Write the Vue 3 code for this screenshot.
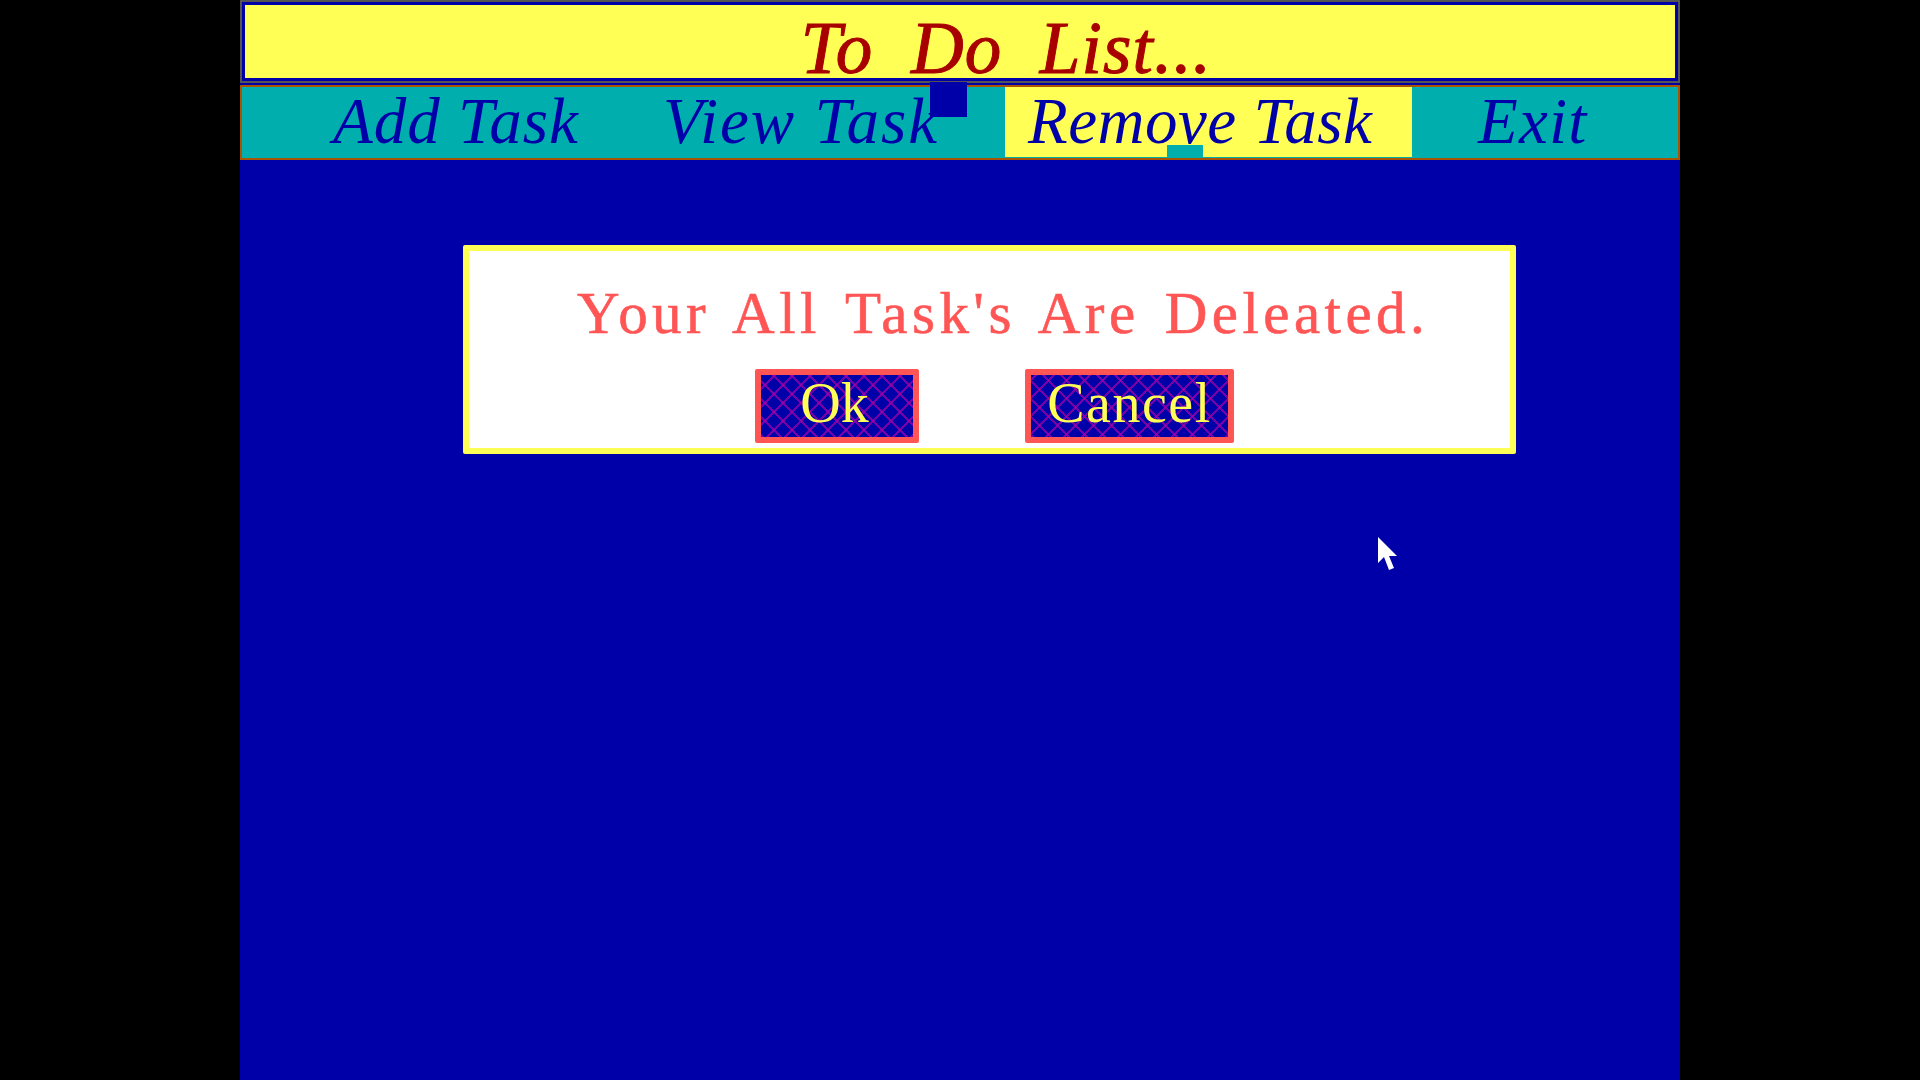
<script setup>
const menu = [
  { label: 'Add Task', active: false },
  { label: 'View Task', active: false },
  { label: 'Remove Task', active: true },
  { label: 'Exit', active: false },
]
</script>

<template>
  <div class="page">
    <main class="screen">
      <header class="title-frame">
        <div class="title-inner">
          <h1 class="title">To Do List...</h1>
        </div>
      </header>

      <nav class="menu">
        <div
          v-for="(item, i) in menu"
          :key="item.label"
          class="menu-item"
          :class="[`menu-item-${i}`, { active: item.active }]"
        >
          {{ item.label }}
        </div>
      </nav>

      <span class="residue residue-blue"></span>
      <span class="residue residue-teal"></span>

      <section class="dialog">
        <p class="message">Your All Task's Are Deleated.</p>
        <div class="actions">
          <button class="btn btn-ok" type="button">Ok</button>
          <button class="btn btn-cancel" type="button">Cancel</button>
        </div>
      </section>

      <svg class="cursor" width="20" height="34" viewBox="0 0 20 34">
        <path d="M0 0V26L6 20L11 33L16 31L11 19H19Z" fill="#fff" />
      </svg>
    </main>
  </div>
</template>

<style>
html,
body {
  margin: 0;
  background: #000;
}
</style>

<style scoped>
.page {
  display: flex;
  justify-content: center;
  height: 1080px;
  background: #000;
  overflow: hidden;
}

.screen {
  position: relative;
  width: 1440px;
  height: 1080px;
  background: #0000a8;
}

.title-frame {
  box-sizing: border-box;
  height: 82.5px;
  border: 2.5px solid #545454;
}

.title-inner {
  box-sizing: border-box;
  height: 100%;
  border: 3px solid #0000a8;
  background: #ffff55;
  display: flex;
  justify-content: center;
}

.title {
  margin: 0;
  padding: 8px 0 0 93px;
  font: italic 400 73px/71px "Liberation Serif", serif;
  color: #a80000;
  letter-spacing: 1.15px;
  word-spacing: 18px;
  white-space: nowrap;
  -webkit-text-stroke: 1px #a80000;
}

.menu {
  box-sizing: border-box;
  display: grid;
  grid-template-columns: 388px 375px 407px 1fr;
  height: 75px;
  margin-top: 2.5px;
  border: 2.5px solid #a85400;
  background: #00aeae;
}

.menu-item {
  height: 70px;
  font: italic 400 65px/69px "Liberation Serif", serif;
  color: #0000a8;
  white-space: nowrap;
}

.menu-item-0 {
  padding-left: 91px;
  letter-spacing: 1px;
}

.menu-item-1 {
  padding-left: 33px;
  letter-spacing: 2px;
}

.menu-item-2 {
  padding-left: 23px;
  letter-spacing: 0.5px;
}

.menu-item-3 {
  padding-left: 66px;
  letter-spacing: 1.2px;
}

.menu-item.active {
  background: #ffff55;
}

.residue {
  position: absolute;
}

.residue-blue {
  left: 690px;
  top: 82px;
  width: 37px;
  height: 35px;
  background: #0000a8;
}

.residue-teal {
  left: 927px;
  top: 145px;
  width: 36px;
  height: 12.5px;
  background: #00aeae;
}

.dialog {
  box-sizing: border-box;
  width: 1053px;
  height: 209px;
  margin: 85px 0 0 223px;
  border: 6.75px solid #ffff55;
  border-radius: 2px;
  background: #fff;
}

.message {
  margin: 0;
  padding: 30px 0 0 108px;
  font: 400 59px/64px "Liberation Serif", serif;
  color: #ff5555;
  letter-spacing: 4.45px;
  word-spacing: 6px;
  white-space: nowrap;
  -webkit-text-stroke: 0.6px #ff5555;
}

.actions {
  display: flex;
  gap: 106px;
  margin: 23.5px 0 0 286px;
}

.btn {
  box-sizing: border-box;
  height: 74px;
  padding: 0 0 7px;
  border: 6.75px solid #ff5555;
  border-radius: 2px;
  color: #ffff55;
  font: 400 56px/56px "Liberation Serif", serif;
  letter-spacing: 1.5px;
  background-color: #0000a8;
  background-image:
    repeating-linear-gradient(45deg, rgba(168, 0, 168, 0.7) 0 2.5px, transparent 2.5px 12.73px),
    repeating-linear-gradient(-45deg, rgba(168, 0, 168, 0.7) 0 2.5px, transparent 2.5px 12.73px);
}

.btn-ok {
  width: 164px;
  padding-right: 5px;
  letter-spacing: 0;
}

.btn-cancel {
  width: 209px;
}

.cursor {
  position: absolute;
  left: 1138px;
  top: 537px;
}
</style>
